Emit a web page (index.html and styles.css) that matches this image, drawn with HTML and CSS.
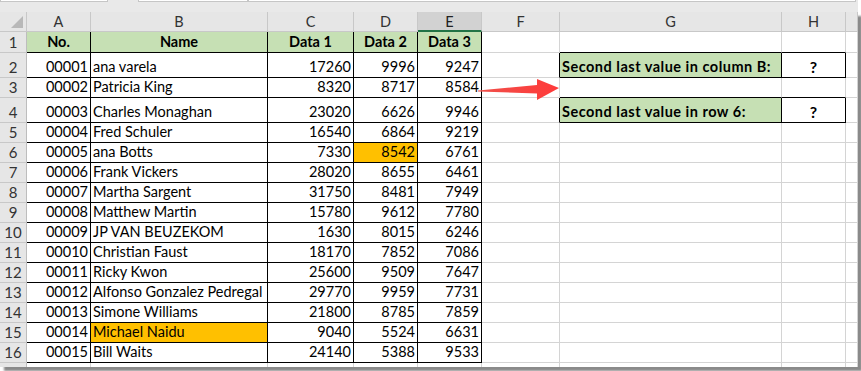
FILE: index.html
```html
<!DOCTYPE html>
<html>
<head>
<meta charset="utf-8">
<link rel="stylesheet" href="styles.css">
</head>
<body>
<div class="topbar">
  <div class="box box1"></div>
  <div class="box box2"></div>
  <div class="box box3"></div>
</div>
<div class="wrap">
  <div class="sheet">
    <div class="ch corner"><span class="tri"></span></div>
    <div class="ch">A</div><div class="ch">B</div><div class="ch">C</div><div class="ch">D</div><div class="ch sel">E</div><div class="ch">F</div><div class="ch">G</div><div class="ch">H</div><div class="ch"></div>

    <div class="rh">1</div>
    <div class="c t h">No.</div><div class="c t h">Name</div><div class="c t h">Data 1</div><div class="c t h">Data 2</div><div class="c t h">Data 3</div><div class="c"></div><div class="c bb"></div><div class="c bb"></div><div class="c"></div>

    <div class="rh">2</div>
    <div class="c t n">00001</div><div class="c t">ana varela</div><div class="c t n">17260</div><div class="c t n">9996</div><div class="c t n">9247</div><div class="c br"></div><div class="c t g b">Second last value in column B:</div><div class="c t b ctr q">?</div><div class="c"></div>

    <div class="rh">3</div>
    <div class="c t n">00002</div><div class="c t">Patricia King</div><div class="c t n">8320</div><div class="c t n">8717</div><div class="c t n">8584</div><div class="c"></div><div class="c bb"></div><div class="c bb"></div><div class="c"></div>

    <div class="rh">4</div>
    <div class="c t n">00003</div><div class="c t">Charles Monaghan</div><div class="c t n">23020</div><div class="c t n">6626</div><div class="c t n">9946</div><div class="c br"></div><div class="c t g b">Second last value in row 6:</div><div class="c t b ctr q">?</div><div class="c"></div>

    <div class="rh">5</div>
    <div class="c t n">00004</div><div class="c t">Fred Schuler</div><div class="c t n">16540</div><div class="c t n">6864</div><div class="c t n">9219</div><div class="c"></div><div class="c"></div><div class="c"></div><div class="c"></div>

    <div class="rh">6</div>
    <div class="c t n">00005</div><div class="c t">ana Botts</div><div class="c t n">7330</div><div class="c t n o">8542</div><div class="c t n">6761</div><div class="c"></div><div class="c"></div><div class="c"></div><div class="c"></div>

    <div class="rh">7</div>
    <div class="c t n">00006</div><div class="c t">Frank Vickers</div><div class="c t n">28020</div><div class="c t n">8655</div><div class="c t n">6461</div><div class="c"></div><div class="c"></div><div class="c"></div><div class="c"></div>

    <div class="rh">8</div>
    <div class="c t n">00007</div><div class="c t">Martha Sargent</div><div class="c t n">31750</div><div class="c t n">8481</div><div class="c t n">7949</div><div class="c"></div><div class="c"></div><div class="c"></div><div class="c"></div>

    <div class="rh">9</div>
    <div class="c t n">00008</div><div class="c t">Matthew Martin</div><div class="c t n">15780</div><div class="c t n">9612</div><div class="c t n">7780</div><div class="c"></div><div class="c"></div><div class="c"></div><div class="c"></div>

    <div class="rh">10</div>
    <div class="c t n">00009</div><div class="c t">JP VAN BEUZEKOM</div><div class="c t n">1630</div><div class="c t n">8015</div><div class="c t n">6246</div><div class="c"></div><div class="c"></div><div class="c"></div><div class="c"></div>

    <div class="rh">11</div>
    <div class="c t n">00010</div><div class="c t">Christian Faust</div><div class="c t n">18170</div><div class="c t n">7852</div><div class="c t n">7086</div><div class="c"></div><div class="c"></div><div class="c"></div><div class="c"></div>

    <div class="rh">12</div>
    <div class="c t n">00011</div><div class="c t">Ricky Kwon</div><div class="c t n">25600</div><div class="c t n">9509</div><div class="c t n">7647</div><div class="c"></div><div class="c"></div><div class="c"></div><div class="c"></div>

    <div class="rh">13</div>
    <div class="c t n">00012</div><div class="c t">Alfonso Gonzalez Pedregal</div><div class="c t n">29770</div><div class="c t n">9959</div><div class="c t n">7731</div><div class="c"></div><div class="c"></div><div class="c"></div><div class="c"></div>

    <div class="rh">14</div>
    <div class="c t n">00013</div><div class="c t">Simone Williams</div><div class="c t n">21800</div><div class="c t n">8785</div><div class="c t n">7859</div><div class="c"></div><div class="c"></div><div class="c"></div><div class="c"></div>

    <div class="rh">15</div>
    <div class="c t n">00014</div><div class="c t o">Michael Naidu</div><div class="c t n">9040</div><div class="c t n">5524</div><div class="c t n">6631</div><div class="c"></div><div class="c"></div><div class="c"></div><div class="c"></div>

    <div class="rh">16</div>
    <div class="c t n">00015</div><div class="c t">Bill Waits</div><div class="c t n">24140</div><div class="c t n">5388</div><div class="c t n">9533</div><div class="c"></div><div class="c"></div><div class="c"></div><div class="c"></div>

    <div class="rh last"></div>
    <div class="c last"></div><div class="c last"></div><div class="c last"></div><div class="c last"></div><div class="c last"></div><div class="c last"></div><div class="c last"></div><div class="c last"></div><div class="c last"></div>
  </div>
  <svg class="arrow" width="90" height="30" viewBox="0 0 90 30">
    <defs>
      <linearGradient id="ag" x1="0" y1="0" x2="1" y2="0">
        <stop offset="0" stop-color="#f0504a"/>
        <stop offset="1" stop-color="#ff3a3a"/>
      </linearGradient>
    </defs>
    <polygon points="0,12.5 59,7 59,1 81,10 59,22 59,15.5 0,13.5" fill="url(#ag)"/>
  </svg>
</div>
</body>
</html>
```
FILE: styles.css
```css
html, body {
  margin: 0;
  padding: 0;
  background: #ffffff;
  overflow: hidden;
}
body {
  width: 861px;
  height: 371px;
  font-family: Lato, "Open Sans", sans-serif;
  font-size: 14.5px;
  color: #000;
}
.topbar {
  height: 12px;
  background: #e9e9e9;
  display: flex;
  align-items: flex-start;
  width: 858px;
}
.box {
  height: 1px;
  background: #fff;
  border: 1px solid #c6c6c6;
  border-top: none;
}
.box1 { width: 106px; }
.box2 { width: 108px; margin-left: 30px; }
.box3 { width: 606px; margin-left: 0; }

.wrap {
  position: relative;
  width: 858px;
  height: 355px;
  box-shadow: 4px 4px 2px #8a8a8a;
}
.sheet {
  display: grid;
  grid-template-columns: 27px 64px 177px 86px 64px 64px 78px 222px 64px 12px;
  grid-template-rows: 20px 21px 25px 20px 25px repeat(12, 20px) 4px;
  background: #fff;
}
.sheet > div {
  box-sizing: border-box;
  border-right: 1px solid #d4d4d4;
  border-bottom: 1px solid #d4d4d4;
  overflow: hidden;
  white-space: nowrap;
}
.c {
  display: flex;
  align-items: flex-end;
  padding: 0 2px 1px 2px;
  line-height: 18px;
}
.ch {
  background: #e6e6e6;
  display: flex;
  align-items: center;
  justify-content: center;
  color: #333;
  line-height: 18px;
  padding-top: 1px;
}
.sheet > .ch {
  border-right-color: #c8c8c8;
  border-bottom-color: #c8c8c8;
}
.ch.corner {
  position: relative;
}
.tri {
  position: absolute;
  right: 3px;
  bottom: 3px;
  width: 0;
  height: 0;
  border-left: 12px solid transparent;
  border-bottom: 12px solid #b8b8b8;
}
.sheet > .ch.sel {
  background: #d2d2d2;
  border-bottom: 2px solid #217346;
  color: #222;
}
.rh {
  background: #e6e6e6;
  display: flex;
  align-items: flex-end;
  justify-content: center;
  color: #333;
  font-size: 15px;
  line-height: 18px;
  padding-bottom: 1px;
}
.sheet > .rh {
  border-right-color: #bdbdbd;
  border-bottom-color: #c8c8c8;
}
.sheet > .t {
  border-right-color: #000;
  border-bottom-color: #000;
}
.sheet > .bb {
  border-bottom-color: #000;
}
.sheet > .br {
  border-right-color: #000;
}
.sheet > .last {
  border-bottom: none;
}
.n {
  justify-content: flex-end;
}
.h {
  background: #c6e0b4;
  font-weight: 700;
  justify-content: center;
}
.g {
  background: #c6e0b4;
  letter-spacing: 0.5px;
}
.b {
  font-weight: 700;
}
.ctr {
  justify-content: center;
}
.q {
  font-size: 16px;
}
.o {
  background: #ffc000;
}
.arrow {
  position: absolute;
  left: 478px;
  top: 66px;
}
```
